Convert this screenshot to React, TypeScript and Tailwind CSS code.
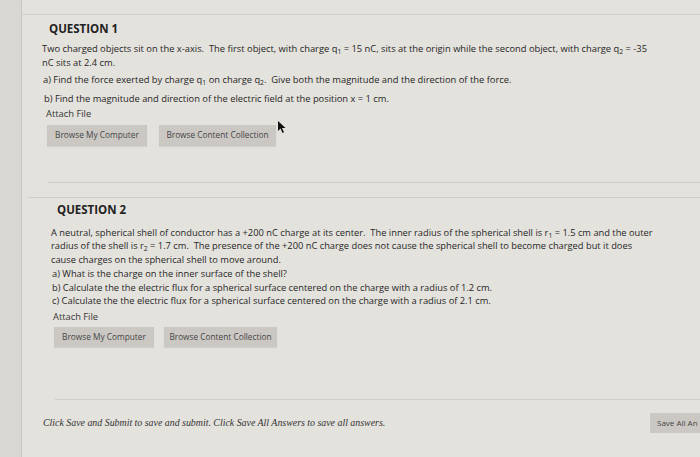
import React from "react";

const Btn = ({ children, cls }: { children: React.ReactNode; cls: string }) => (
  <div className={`bg-[#cbc8c3] text-[#454545] text-[8.3px] flex items-center justify-center shadow-[0_1px_1px_rgba(0,0,0,0.08)] ${cls}`}>
    {children}
  </div>
);

const S = ({ children }: { children: React.ReactNode }) => (
  <sub className="text-[6.8px] align-baseline relative top-[2px]">{children}</sub>
);

export default function App() {
  return (
    <div className="w-[700px] h-[457px] overflow-hidden bg-[#e4e2dd] flex font-['Open_Sans',sans-serif] text-[#262626]">
      <div className="w-[22px] shrink-0 bg-[#d9d7d2] border-r border-[#c8c6c1]" />
      <div className="flex-1 flex flex-col">
        <div className="h-[15px] shrink-0 border-b border-[#d0cec9]" />
        {/* Question 1 */}
        <div className="pl-[27px] pt-[6px] text-[11.5px] font-bold leading-[15px] text-[#222]">QUESTION 1</div>
        <div className="pl-[20px] pt-[6px] text-[9.35px] leading-[13.5px]">
          <div className="whitespace-nowrap">
            Two charged objects sit on the x-axis.&nbsp; The first object, with charge q<S>1</S> = 15 nC, sits at the origin while the second object, with charge q<S>2</S> = -35
          </div>
          <div>nC sits at 2.4 cm.</div>
          <div className="pl-[1px] pt-[4px]">
            a) Find the force exerted by charge q<S>1</S> on charge q<S>2</S>.&nbsp; Give both the magnitude and the direction of the force.
          </div>
          <div className="pl-[2px] pt-[5px]">b) Find the magnitude and direction of the electric field at the position x = 1 cm.</div>
          <div className="pl-[4px] pt-[2px] text-[#363636]">Attach File</div>
        </div>
        <div className="pl-[25px] pt-[4px] flex gap-[12px] items-start">
          <Btn cls="w-[100px] h-[21px]">Browse My Computer</Btn>
          <Btn cls="w-[117px] h-[21px]">Browse Content Collection</Btn>
          <svg width="10" height="14" viewBox="0 0 10 14" className="ml-[-11px] mt-[-5px]">
            <path d="M1 1 L1 11 L3.5 8.5 L5.5 13 L7 12.3 L5 8 L8.5 8 Z" fill="#111" />
          </svg>
        </div>
        <div className="h-[36px] shrink-0" />
        <div className="ml-[26px] border-t border-[#cfcdc8]" />
        <div className="h-[14px] shrink-0" />
        <div className="ml-[6px] border-t border-[#cfcdc8]" />
        {/* Question 2 */}
        <div className="pl-[35px] pt-[4px] text-[11.5px] font-bold leading-[15px] text-[#222]">QUESTION 2</div>
        <div className="pl-[29px] pt-[9px] text-[9.3px] leading-[13.8px]">
          <div className="whitespace-nowrap">
            A neutral, spherical shell of conductor has a +200 nC charge at its center.&nbsp; The inner radius of the spherical shell is r<S>1</S> = 1.5 cm and the outer
          </div>
          <div className="whitespace-nowrap">
            radius of the shell is r<S>2</S> = 1.7 cm.&nbsp; The presence of the +200 nC charge does not cause the spherical shell to become charged but it does
          </div>
          <div>cause charges on the spherical shell to move around.</div>
          <div className="pl-[1px]">a) What is the charge on the inner surface of the shell?</div>
          <div className="pl-[1px]">b) Calculate the the electric flux for a spherical surface centered on the charge with a radius of 1.2 cm.</div>
          <div className="pl-[1px]">c) Calculate the the electric flux for a spherical surface centered on the charge with a radius of 2.1 cm.</div>
          <div className="pl-[2px] pt-[2px] text-[#363636]">Attach File</div>
        </div>
        <div className="pl-[32px] pt-[3px] flex gap-[10px]">
          <Btn cls="w-[100px] h-[20px]">Browse My Computer</Btn>
          <Btn cls="w-[113px] h-[20px]">Browse Content Collection</Btn>
        </div>
        <div className="h-[52px] shrink-0" />
        <div className="ml-[33px] border-t border-[#d0cec9]" />
        <div className="flex items-start justify-between pt-[13px]">
          <div className="pl-[21px] pt-[3px] font-['Liberation_Serif',serif] italic text-[9.9px] text-[#333]">
            Click Save and Submit to save and submit. Click Save All Answers to save all answers.
          </div>
          <div className="w-[50px] h-[20px] bg-[#cbc8c3] text-[#444] text-[8px] flex items-center pl-[7px] whitespace-nowrap overflow-hidden">
            Save All An
          </div>
        </div>
      </div>
    </div>
  );
}
